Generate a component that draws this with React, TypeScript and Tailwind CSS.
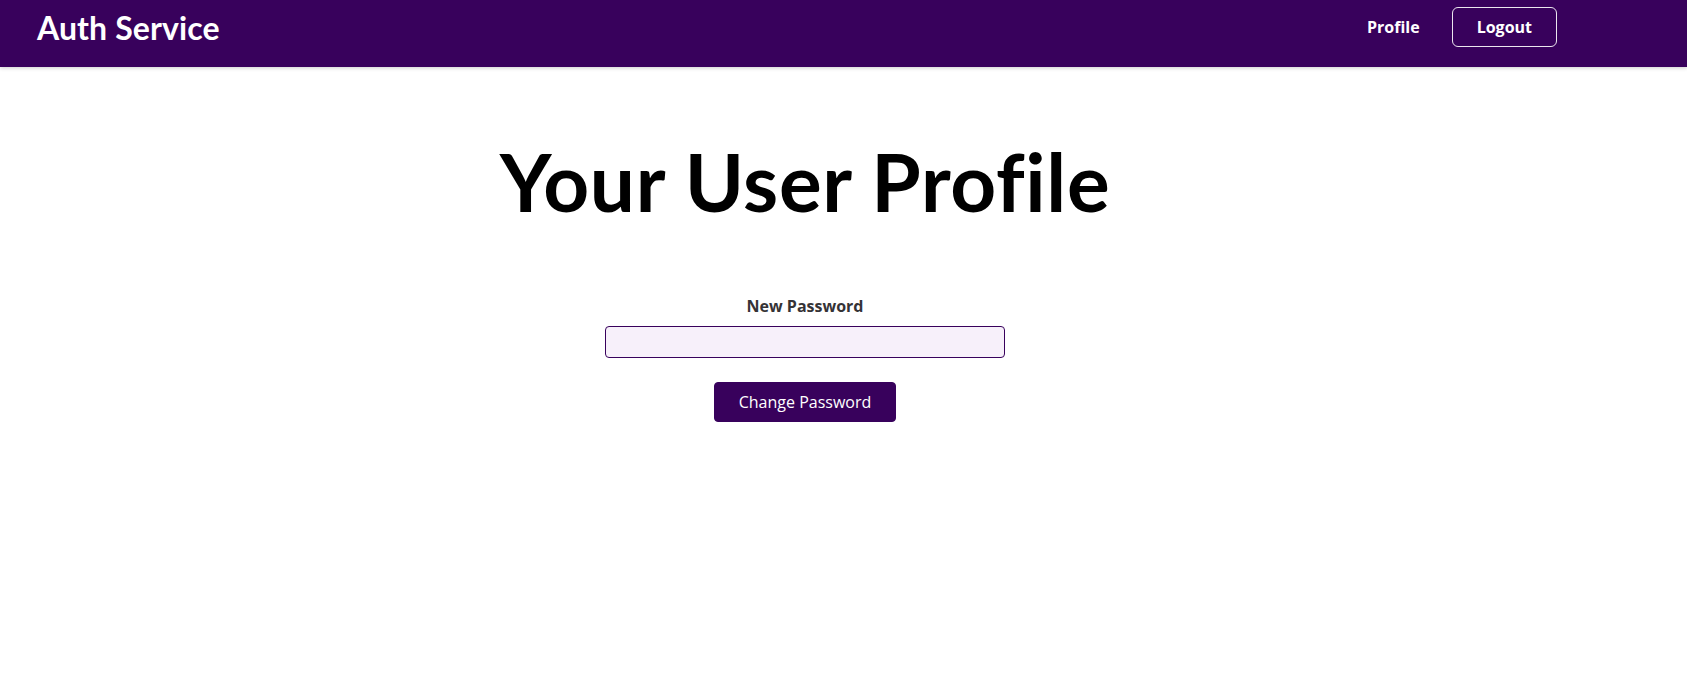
export default function App() {
  return (
    <div className="min-h-screen bg-white font-['Open_Sans',sans-serif] leading-[normal]">
      {/* Header */}
      <header className="flex h-[67px] w-full items-start justify-between bg-[#38015c] pl-[37px] pr-[130px] shadow-[0_1px_4px_rgba(0,0,0,0.2)]">
        <div className="mt-[12px] font-['Lato',sans-serif] text-[32px] font-bold leading-none tracking-[0.1px] text-white">
          Auth Service
        </div>
        <nav>
          <ul className="mt-[7px] flex items-baseline gap-8">
            <li>
              <a href="#" className="text-base font-bold text-white">
                Profile
              </a>
            </li>
            <li>
              <button className="rounded-[6px] border border-white/90 bg-transparent px-6 py-2 text-base font-bold leading-[normal] text-white">
                Logout
              </button>
            </li>
          </ul>
        </nav>
      </header>

      {/* Profile */}
      <main className="w-[1610px] pt-[66px] text-center">
        <h1 className="font-['Lato',sans-serif] text-[80px] font-bold leading-[1.2] tracking-[0.7px] text-black">
          Your User Profile
        </h1>

        <form className="mx-auto mt-[65px] w-[400px]">
          <div className="mb-2">
            <label htmlFor="new-password" className="mb-2 block text-base font-bold text-[#353336]">
              New Password
            </label>
            <input
              id="new-password"
              type="password"
              className="block h-[32px] w-full rounded-[4px] border border-[#38015c] bg-[#f7f0fa] p-1 text-base"
            />
          </div>
          <div className="mt-6">
            <button className="rounded-[4px] border border-[#38015c] bg-[#38015c] px-6 py-2 text-base leading-[normal] text-white">
              Change Password
            </button>
          </div>
        </form>
      </main>
    </div>
  )
}
